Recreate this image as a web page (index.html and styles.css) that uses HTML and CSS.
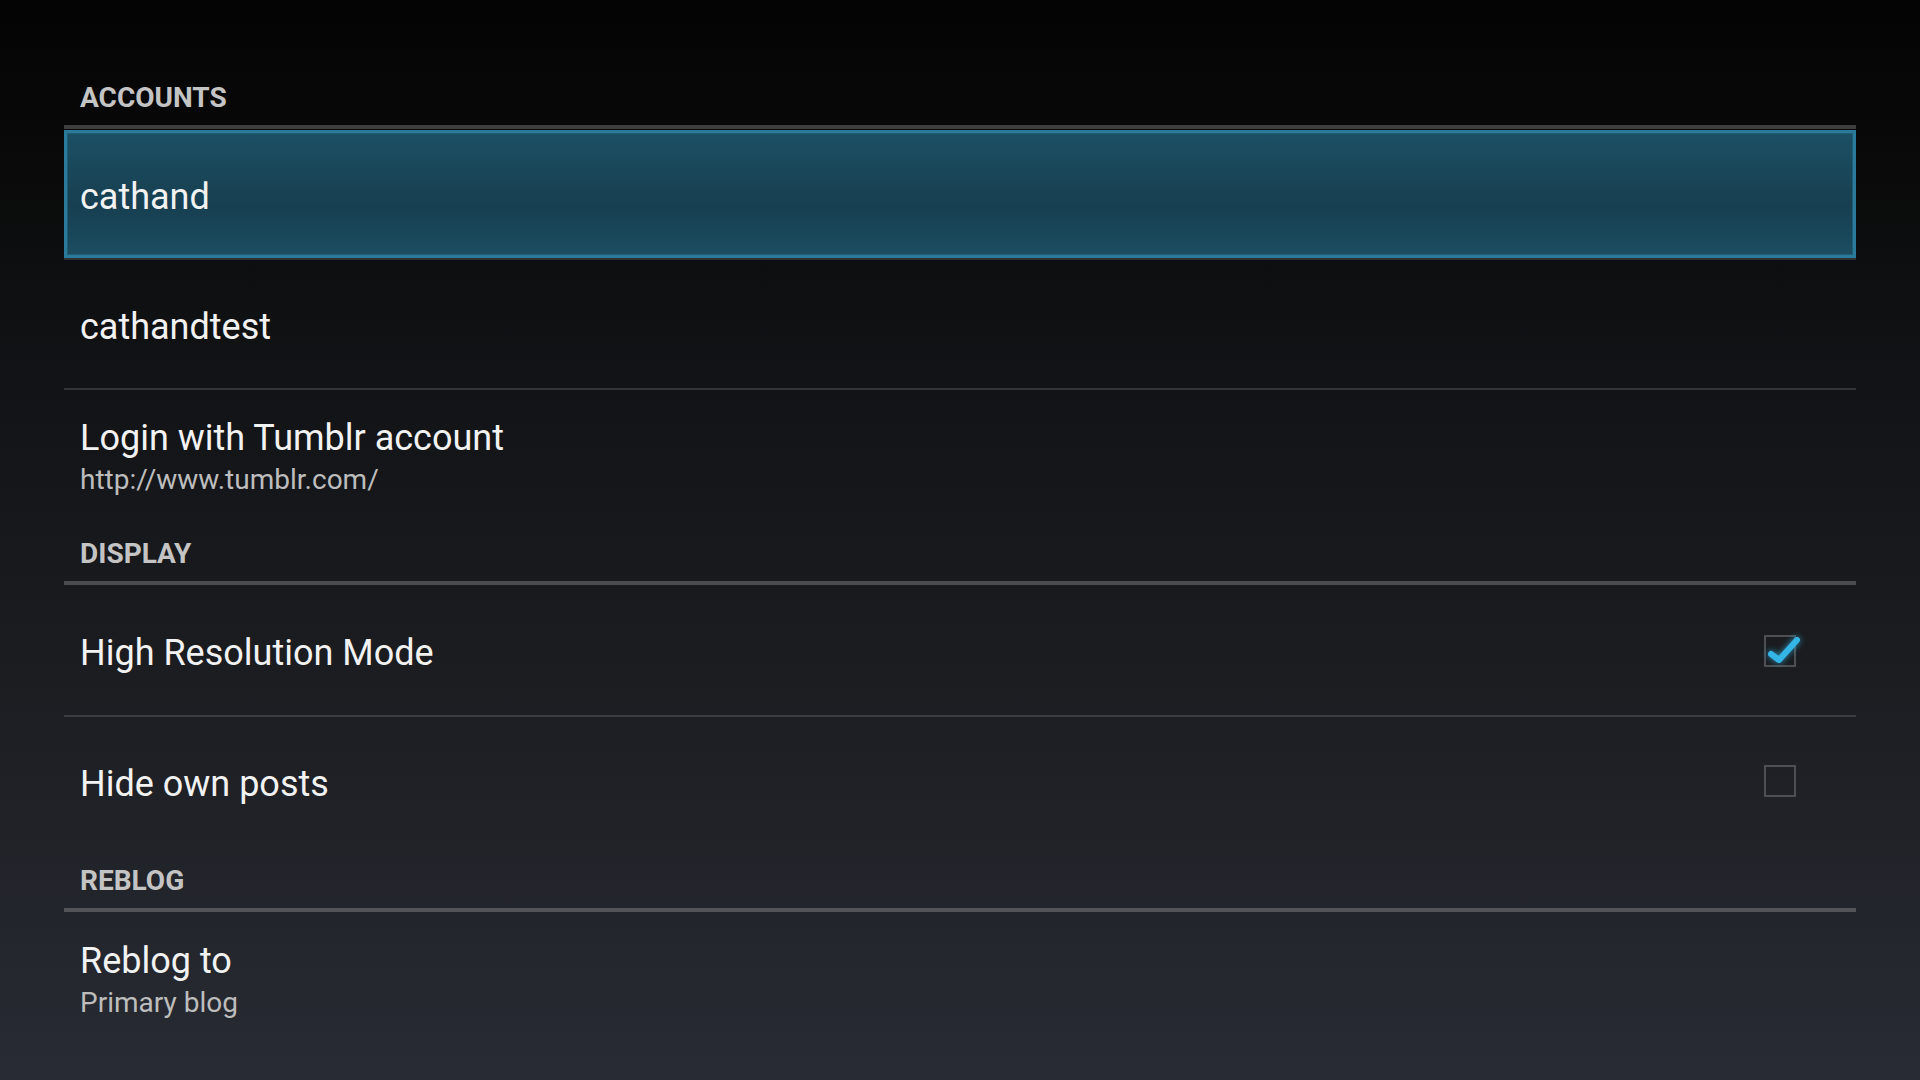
FILE: index.html
```html
<!DOCTYPE html>
<html lang="en">

<head>
    <meta charset="UTF-8">
    <meta name="viewport" content="width=device-width, initial-scale=1.0">
    <title>Settings</title>
    <link rel="stylesheet" href="styles.css">
</head>

<body>

    <div class="prefs">

        <div class="category">ACCOUNTS</div>
        <div class="item selected">
            <div class="title">cathand</div>
        </div>
        <div class="item">
            <div class="title">cathandtest</div>
        </div>
        <div class="item">
            <div class="text">
                <div class="title">Login with Tumblr account</div>
                <div class="summary">http://www.tumblr.com/</div>
            </div>
        </div>

        <div class="category">DISPLAY</div>
        <div class="item check">
            <div class="title">High Resolution Mode</div>
            <div class="checkbox">
                <svg class="tick" viewBox="0 0 32 32">
                    <path d="M7 19 L15 25 L33 5" />
                </svg>
            </div>
        </div>
        <div class="item check">
            <div class="title">Hide own posts</div>
            <div class="checkbox"></div>
        </div>

        <div class="category">REBLOG</div>
        <div class="item">
            <div class="text">
                <div class="title">Reblog to</div>
                <div class="summary">Primary blog</div>
            </div>
        </div>

    </div>

</body>

</html>
```

FILE: styles.css
```css
html,
body {
    height: 100%;
}

body {
    margin: 0;
    font-family: Roboto, "Noto Sans", sans-serif;
    color: #f2f2f2;
    background: linear-gradient(to bottom, #040404 0%, #080808 12%, #101113 30%, #1a1c20 60%, #282b33 100%);
    overflow: hidden;
}

* {
    box-sizing: border-box;
}

.prefs {
    padding: 62px 64px 0 64px;
}

/* section header with the thick rule under it */
.category {
    padding: 19px 16px 11px 16px;
    font-size: 28px;
    line-height: 33px;
    font-weight: bold;
    color: #c4c4c4;
    border-bottom: 4px solid rgba(255, 255, 255, 0.22);
    margin-bottom: 1px;
}

.item {
    display: flex;
    align-items: center;
    height: 128px;
    padding: 0 16px;
}

.item + .item {
    height: 130px;
    border-top: 2px solid rgba(255, 255, 255, 0.14);
}

.item.check {
    height: 129px;
}

.item.check + .item.check {
    height: 130px;
}

.title {
    font-size: 36px;
    line-height: 42px;
    padding-top: 5px;
    flex: 1;
}

.text {
    padding-top: 6px;
}

.text .title {
    padding-top: 0;
}

.summary {
    font-size: 28px;
    line-height: 34px;
    margin-top: 4px;
    color: #bdbdbd;
}

.selected {
    border: 3px solid #2a7b9b;
    padding: 0 13px;
    margin-top: 1px;
    height: 128px;
    background: linear-gradient(to bottom, #1c5064 0%, #184355 45%, #173f51 60%, #1b4d61 100%);
    box-shadow: inset 0 0 0 1px #215f77;
}

.checkbox {
    position: relative;
    width: 32px;
    height: 32px;
    border: 2px solid #4d4f52;
    margin-right: 44px;
}

.tick {
    position: absolute;
    left: -2px;
    top: -2px;
    width: 32px;
    height: 32px;
    overflow: visible;
    filter: drop-shadow(0 0 3px rgba(51, 181, 229, 0.8));
}

.tick path {
    fill: none;
    stroke: #33b5e5;
    stroke-width: 6;
    stroke-linecap: round;
    stroke-linejoin: round;
}
```
